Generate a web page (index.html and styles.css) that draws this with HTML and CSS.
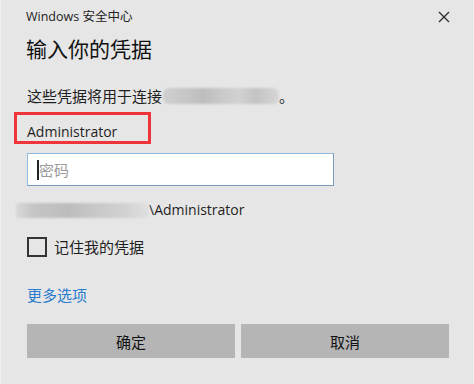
FILE: index.html
```html
<!DOCTYPE html>
<html lang="zh-CN">
<head>
    <meta charset="UTF-8">
    <meta name="viewport" content="width=device-width, initial-scale=1.0">
    <title>Windows 安全中心</title>
    <link rel="stylesheet" href="styles.css">
</head>
<body>
    <div class="dialog">
        <div class="title-bar">
            <span class="app-name">Windows 安全中心</span>
            <svg class="close" width="12" height="12" viewBox="0 0 12 12">
                <path d="M1 1 L11 11 M11 1 L1 11" stroke="#2b2b2b" stroke-width="1.3" fill="none"/>
            </svg>
        </div>
        <h1>输入你的凭据</h1>
        <p class="desc">这些凭据将用于连接<span class="mask mask-host"></span>。</p>
        <div class="user-box">Administrator</div>
        <div class="password">
            <span class="caret"></span>
            <span class="placeholder">密码</span>
        </div>
        <p class="domain"><span class="mask mask-domain"></span>\Administrator</p>
        <label class="remember">
            <span class="checkbox"></span>
            记住我的凭据
        </label>
        <a class="more" href="#">更多选项</a>
        <div class="buttons">
            <button class="btn">确定</button>
            <button class="btn">取消</button>
        </div>
    </div>
</body>
</html>
```

FILE: styles.css
```css
body {
    margin: 0;
    padding: 0;
    background-color: #e6e6e6;
    font-family: "Open Sans", "Noto Sans CJK SC", sans-serif;
    color: #1f1f1f;
}

.dialog {
    height: 384px;
    box-sizing: border-box;
    padding: 0 26px;
    border-left: 1px solid #f0f0f0;
    border-right: 1px solid #f0f0f0;
    display: flex;
    flex-direction: column;
    align-items: flex-start;
}

.title-bar {
    width: 100%;
    margin-top: 8px;
    display: flex;
    justify-content: space-between;
    align-items: center;
}

.app-name {
    font-size: 12.5px;
    line-height: 18px;
    color: #222;
    margin-left: -1px;
}

.close {
    margin-right: -3px;
}

h1 {
    margin: 9px 0 0 -1px;
    font-size: 21px;
    line-height: 28px;
    font-weight: normal;
    color: #111;
}

.desc {
    margin: 23px 0 0;
    font-size: 15px;
    line-height: 20px;
    display: flex;
    align-items: center;
}

.mask {
    display: inline-block;
    height: 16px;
    border-radius: 6px;
    filter: blur(1px);
    background: linear-gradient(90deg, #cfcfcf 0%, #c6c6c6 20%, #bdbdbd 35%, #c9c9c9 50%, #d2d2d2 65%, #c3c3c3 80%, #d6d6d6 100%);
}

.mask-host {
    width: 116px;
    margin: 0 0 0 1px;
}

.user-box {
    margin: 6px 0 0 -13px;
    width: 137px;
    height: 32px;
    box-sizing: border-box;
    border: 3px solid #ef3539;
    padding: 7px 0 0 10px;
    font-size: 14px;
    line-height: 20px;
}

.password {
    margin-top: 9px;
    width: 307px;
    height: 33px;
    box-sizing: border-box;
    background: #fff;
    border: 1px solid #8fbbe3;
    border-right-color: #7d9bbf;
    border-bottom-color: #7d9bbf;
    display: flex;
    align-items: center;
    padding-left: 9px;
}

.caret {
    width: 2px;
    height: 20px;
    background: #222;
}

.placeholder {
    font-size: 15px;
    color: #9a9a9a;
}

.domain {
    margin: 14px 0 0 -11px;
    font-size: 14px;
    line-height: 20px;
    display: flex;
    align-items: center;
}

.mask-domain {
    width: 133px;
    height: 15px;
    border-radius: 2px;
    background: linear-gradient(90deg, #d8d8d8 0%, #c4c4c4 15%, #bdbdbd 40%, #c8c8c8 60%, #d0d0d0 80%, #e0e0e0 100%);
}

.remember {
    margin-top: 17px;
    display: flex;
    align-items: center;
    font-size: 15px;
    line-height: 20px;
}

.checkbox {
    width: 20px;
    height: 20px;
    box-sizing: border-box;
    border: 2px solid #333;
    margin-right: 7px;
}

.more {
    margin-top: 28px;
    font-size: 15px;
    line-height: 20px;
    color: #2a7ccf;
    text-decoration: none;
}

.buttons {
    margin-top: 19px;
    display: flex;
    gap: 6px;
}

.btn {
    width: 208px;
    height: 34px;
    border: none;
    background-color: #b5b5b5;
    font-family: "Open Sans", "Noto Sans CJK SC", sans-serif;
    font-size: 15px;
    color: #111;
    padding: 0;
}
```
